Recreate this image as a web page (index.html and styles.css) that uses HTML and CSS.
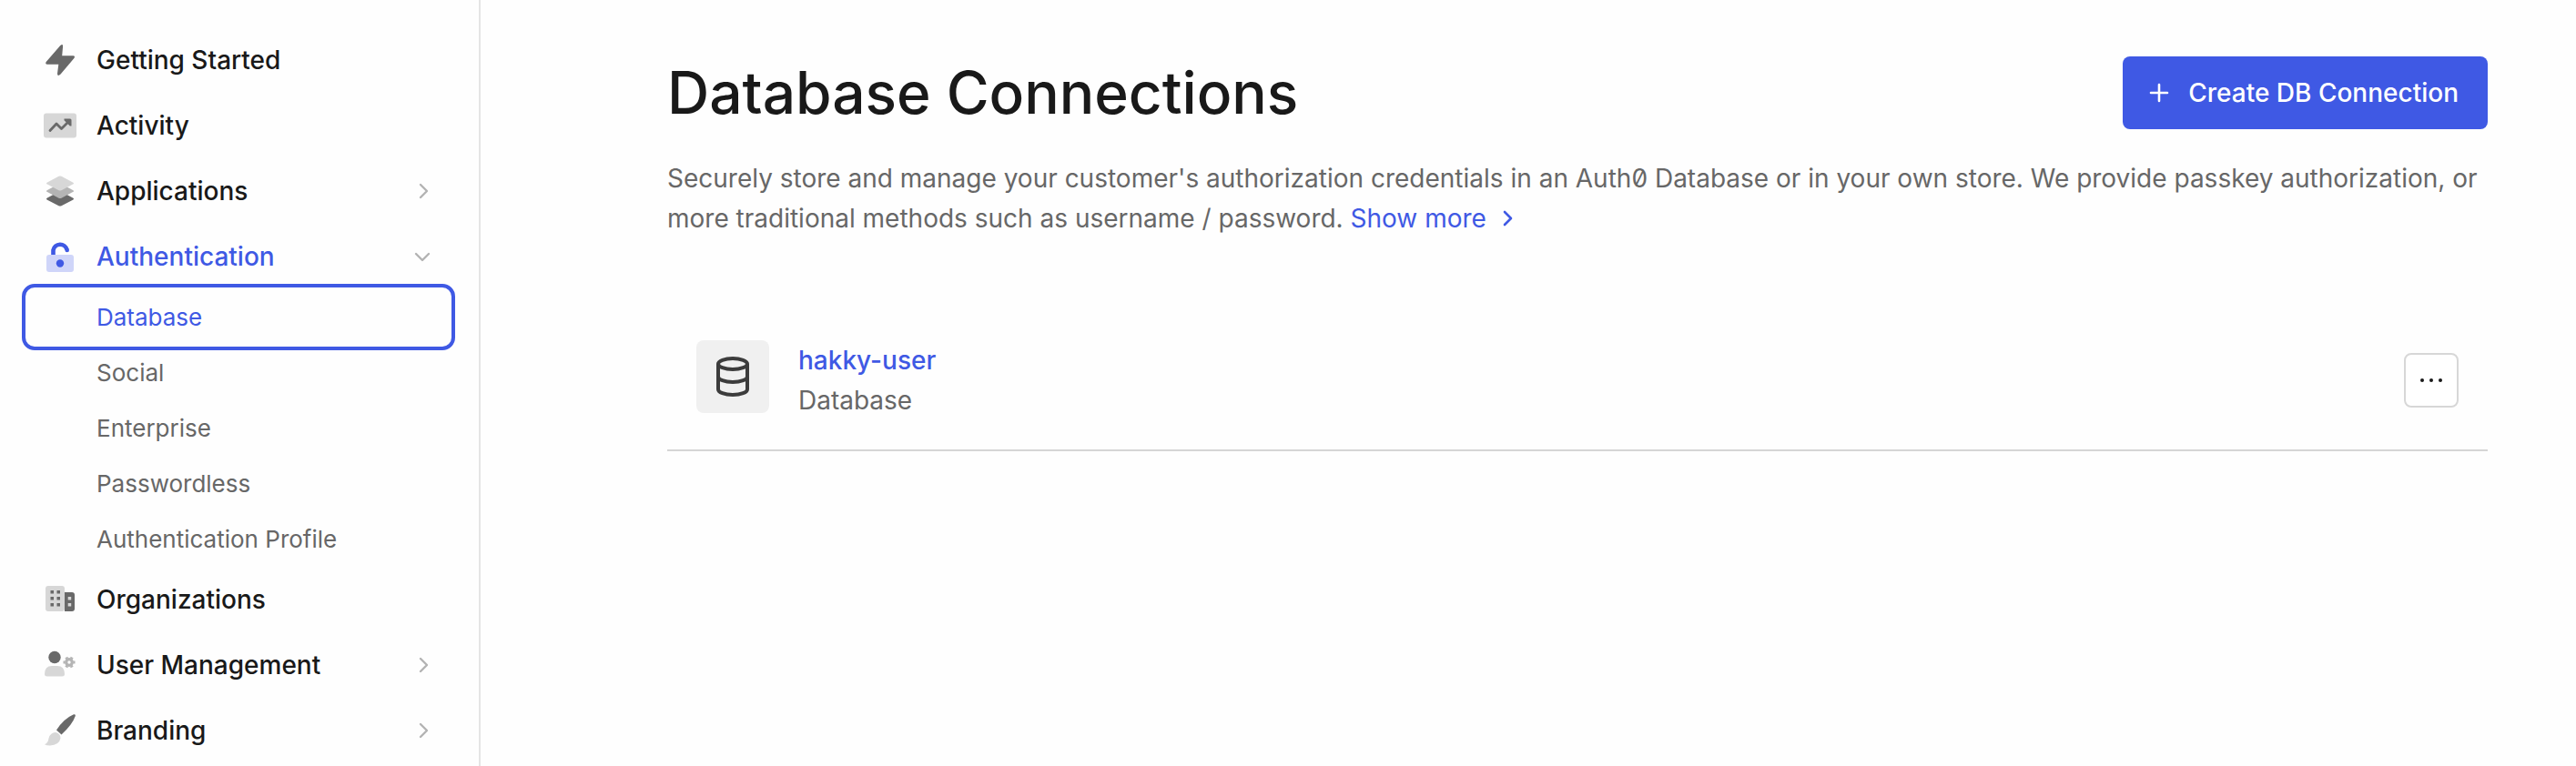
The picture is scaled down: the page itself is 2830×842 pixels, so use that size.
FILE: index.html
```html
<!DOCTYPE html>
<html lang="en">

<head>
    <meta charset="UTF-8">
    <meta name="viewport" content="width=device-width, initial-scale=1.0">
    <title>Database Connections</title>
    <link rel="stylesheet" href="styles.css">
</head>

<body>
    <div class="layout">
        <nav class="sidebar" aria-label="Main">
            <ul class="nav">
                <li>
                    <a class="nav__link" href="#">
                        <svg class="nav__icon" viewBox="0 0 40 40">
                            <path class="dark" d="M20.3 4 Q23.3 1.800 23.100 5 L22.200 15.200 H34.300 Q37 15.500 35.400 18 L20.600 35.600 Q17.200 38.600 17 35 L18.300 24.800 H6 Q3.300 24.600 4.700 22.100 Z" />
                        </svg>
                        <span class="nav__text">Getting Started</span>
                    </a>
                </li>
                <li>
                    <a class="nav__link" href="#">
                        <svg class="nav__icon" viewBox="0 0 40 40">
                            <rect class="light" x="2" y="6.500" width="36" height="27" rx="3" />
                            <path class="line" d="M9 25.500 L16 18 L21.500 23.500 L29 16" />
                            <path class="dark" d="M24.500 12.500 H31 Q32.500 12.500 32.500 14 V20.500 H30.800 L24.500 14.200 Z" />
                        </svg>
                        <span class="nav__text">Activity</span>
                    </a>
                </li>
                <li>
                    <a class="nav__link" href="#">
                        <svg class="nav__icon" viewBox="0 0 40 40">
                            <path class="dark" d="M18.500 20.800 Q20 20.200 21.500 20.800 L34 27.500 Q36 28.600 34 29.700 L21.500 36.200 Q20 37 18.500 36.200 L6 29.700 Q4 28.600 6 27.500 Z" />
                            <path class="mid" d="M18.500 12.200 Q20 11.500 21.500 12.200 L34 18.900 Q36 20 34 21.100 L21.500 27.700 Q20 28.400 18.500 27.700 L6 21.100 Q4 20 6 18.900 Z" />
                            <path class="light" d="M18.500 3.800 Q20 3 21.500 3.800 L34 10.400 Q36 11.500 34 12.600 L21.500 19.200 Q20 20 18.500 19.200 L6 12.600 Q4 11.500 6 10.400 Z" />
                        </svg>
                        <span class="nav__text">Applications</span>
                        <svg class="chevron" viewBox="0 0 32 32">
                            <path d="M16 9 L23 16 L16 23" />
                        </svg>
                    </a>
                </li>
                <li>
                    <a class="nav__link nav__link--active" href="#" aria-expanded="true">
                        <svg class="nav__icon" viewBox="0 0 40 40">
                            <rect class="tint" x="5" y="18" width="30" height="19" rx="3" />
                            <path class="shackle" d="M12.500 18 V13 A7.700 7.700 0 0 1 27.500 12.500" />
                            <circle class="shackle-end" cx="27.700" cy="13" r="2.300" />
                            <circle class="primary" cx="20" cy="27.500" r="4.200" />
                        </svg>
                        <span class="nav__text">Authentication</span>
                        <svg class="chevron" viewBox="0 0 32 32">
                            <path d="M11 13 L18 20 L25 13" />
                        </svg>
                    </a>
                    <ul class="subnav">
                        <li><a class="subnav__link subnav__link--active" href="#" aria-current="page">Database</a></li>
                        <li><a class="subnav__link" href="#">Social</a></li>
                        <li><a class="subnav__link" href="#">Enterprise</a></li>
                        <li><a class="subnav__link" href="#">Passwordless</a></li>
                        <li><a class="subnav__link" href="#">Authentication Profile</a></li>
                    </ul>
                </li>
                <li>
                    <a class="nav__link" href="#">
                        <svg class="nav__icon" viewBox="0 0 40 40">
                            <rect class="light" x="4" y="5" width="21" height="28" rx="3" />
                            <path class="dark" d="M25 12 H33 Q36 12 36 15 V30 Q36 33 33 33 H25 Z" />
                            <path class="dark" d="M9.500 10 h3.500 v3.500 h-3.500 Z M16.500 10 h3.500 v3.500 h-3.500 Z M9.500 17 h3.500 v3.500 h-3.500 Z M16.500 17 h3.500 v3.500 h-3.500 Z M9.500 24 h3.500 v3.500 h-3.500 Z M16.500 24 h3.500 v3.500 h-3.500 Z" />
                            <path class="light" d="M28.700 17 h3.500 v3.500 h-3.500 Z M28.700 24 h3.500 v3.500 h-3.500 Z" />
                        </svg>
                        <span class="nav__text">Organizations</span>
                    </a>
                </li>
                <li>
                    <a class="nav__link" href="#">
                        <svg class="nav__icon" viewBox="0 0 40 40">
                            <circle class="dark" cx="14" cy="11.500" r="6.700" />
                            <path class="light" d="M3 30 Q3 21 11 21 H17 Q25 21 25 30 Q25 32.500 22 32.500 H6 Q3 32.500 3 30 Z" />
                            <circle class="gear" cx="30" cy="17" r="3.300" />
                            <path class="gear" d="M34.500 17 H36.500 M23.500 17 H25.500 M32.300 20.900 L33.200 22.500 M27.700 20.900 L26.800 22.500 M32.300 13.100 L33.200 11.500 M27.700 13.100 L26.800 11.500" />
                        </svg>
                        <span class="nav__text">User Management</span>
                        <svg class="chevron" viewBox="0 0 32 32">
                            <path d="M16 9 L23 16 L16 23" />
                        </svg>
                    </a>
                </li>
                <li>
                    <a class="nav__link" href="#">
                        <svg class="nav__icon" viewBox="0 0 40 40">
                            <path class="dark" d="M16 19.500 Q24 7 35 2.300 Q37.300 1.800 36.800 4 Q33.500 13.500 21.500 24.500 Z" />
                            <path class="light" d="M15 22 Q20.500 23 20.500 28.500 Q19 36 9 36.500 Q5 36.500 3 35.300 Q7 33.500 7.500 28.500 Q9.500 22 15 22 Z" />
                        </svg>
                        <span class="nav__text">Branding</span>
                        <svg class="chevron" viewBox="0 0 32 32">
                            <path d="M16 9 L23 16 L16 23" />
                        </svg>
                    </a>
                </li>
            </ul>
        </nav>

        <main class="content">
            <header class="page-header">
                <h1 class="page-header__title">Database Connections</h1>
                <button class="btn-primary" type="button">
                    <svg class="btn-primary__icon" viewBox="0 0 24 24">
                        <path d="M12 3 V21 M3 12 H21" />
                    </svg>
                    Create DB Connection
                </button>
            </header>

            <p class="description">
                Securely store and manage your customer's authorization credentials in an Auth0 Database or in your own
                store. We provide passkey authorization, or more traditional methods such as username / password.
                <a class="description__more" href="#">Show more<svg class="description__arrow" viewBox="0 0 24 24">
                        <path d="M8 5 L15 12 L8 19" />
                    </svg></a>
            </p>

            <ul class="connections">
                <li class="connection">
                    <div class="connection__icon">
                        <svg viewBox="0 0 48 48">
                            <ellipse cx="24" cy="10" rx="16" ry="6" />
                            <path d="M8 10 V38 C8 41.300 15 44 24 44 S40 41.300 40 38 V10" />
                            <path d="M8 24 C8 27.300 15 30 24 30 S40 27.300 40 24" />
                        </svg>
                    </div>
                    <div class="connection__info">
                        <a class="connection__name" href="#">hakky-user</a>
                        <span class="connection__type">Database</span>
                    </div>
                    <button class="btn-more" type="button" aria-label="More actions">
                        <svg viewBox="0 0 32 32">
                            <circle cx="6" cy="16" r="2" />
                            <circle cx="16" cy="16" r="2" />
                            <circle cx="26" cy="16" r="2" />
                        </svg>
                    </button>
                </li>
            </ul>
        </main>
    </div>
</body>

</html>
```
FILE: styles.css
```css
*,
*::after,
*::before {
    box-sizing: border-box;
}

body {
    margin: 0;
    background-color: #fefefe;
    color: #191919;
    font-family: Inter, sans-serif;
    font-size: 28px;
    line-height: 44px;
}

a {
    color: inherit;
    text-decoration: none;
}

ul {
    list-style: none;
    margin: 0;
    padding: 0;
}

svg {
    display: block;
    flex-shrink: 0;
}

.layout {
    display: flex;
    height: 100vh;
    overflow: hidden;
}

/* Sidebar */
.sidebar {
    width: 528px;
    flex-shrink: 0;
    padding: 30px 32px 0 30px;
    border-right: 2px solid #e5e5e5;
    overflow: hidden;
}

.nav__link {
    display: flex;
    align-items: center;
    gap: 20px;
    height: 72px;
    padding: 0 16px;
    font-weight: 500;
}

.nav__link--active {
    color: #3f59e4;
}

.nav__icon {
    width: 40px;
    height: 40px;
}

.nav__text {
    flex: 1;
}

.dark {
    fill: #696969;
}

.mid {
    fill: #b4b4b4;
}

.light {
    fill: #d7d7d7;
}

.tint {
    fill: #cfd5f9;
}

.primary,
.shackle-end {
    fill: #3f59e4;
}

.line {
    fill: none;
    stroke: #696969;
    stroke-width: 2.8;
    stroke-linecap: round;
    stroke-linejoin: round;
}

.shackle {
    fill: none;
    stroke: #3f59e4;
    stroke-width: 4.6;
}

.gear {
    fill: none;
    stroke: #b4b4b4;
    stroke-width: 3.2;
}

.chevron {
    width: 32px;
    height: 32px;
}

.chevron path {
    fill: none;
    stroke: #b3b3b3;
    stroke-width: 2.4;
    stroke-linecap: round;
    stroke-linejoin: round;
}

.subnav__link {
    display: block;
    padding-left: 76px;
    border-radius: 8px;
    color: #676767;
    font-size: 26px;
    line-height: 61px;
}

.subnav__link--active {
    color: #3f59e4;
    outline: 4px solid #3f59e4;
    outline-offset: 2px;
}

/* Content */
.content {
    flex: 1;
    min-width: 0;
    padding: 62px 97px 0 205px;
}

.page-header {
    display: flex;
    align-items: center;
    justify-content: space-between;
    margin-bottom: 32px;
}

.page-header__title {
    margin: 0;
    font-size: 64px;
    font-weight: 500;
    line-height: 80px;
}

.btn-primary {
    display: flex;
    align-items: center;
    gap: 20px;
    height: 80px;
    padding: 0 32px 0 28px;
    border: none;
    border-radius: 8px;
    background-color: #3f59e4;
    color: #fff;
    font: inherit;
    font-weight: 500;
    cursor: pointer;
}

.btn-primary__icon {
    width: 24px;
    height: 24px;
}

.btn-primary__icon path {
    fill: none;
    stroke: #fff;
    stroke-width: 2.6;
    stroke-linecap: round;
}

.description {
    margin: 0 0 80px;
    color: #676767;
    font-feature-settings: "zero";
}

.description__more {
    color: #3f59e4;
}

.description__arrow {
    display: inline-block;
    width: 24px;
    height: 24px;
    margin-left: 12px;
    vertical-align: -2px;
}

.description__arrow path {
    fill: none;
    stroke: #3f59e4;
    stroke-width: 2.6;
    stroke-linecap: round;
    stroke-linejoin: round;
}

.connection {
    display: flex;
    align-items: center;
    gap: 32px;
    padding: 32px;
    border-bottom: 2px solid #d5d5d5;
}

.connection__icon {
    display: flex;
    align-items: center;
    justify-content: center;
    align-self: flex-start;
    width: 80px;
    height: 80px;
    border-radius: 8px;
    background-color: #f0f0f0;
}

.connection__icon svg {
    width: 48px;
    height: 48px;
    fill: none;
    stroke: #3c3c3c;
    stroke-width: 4;
}

.connection__info {
    display: flex;
    flex: 1;
    flex-direction: column;
    align-items: flex-start;
}

.connection__name {
    color: #3f59e4;
    font-weight: 500;
}

.connection__type {
    color: #676767;
}

.btn-more {
    display: flex;
    align-items: center;
    justify-content: center;
    width: 60px;
    height: 60px;
    padding: 0;
    border: 2px solid #d7d7d7;
    border-radius: 8px;
    background-color: #fff;
    cursor: pointer;
}

.btn-more svg {
    width: 32px;
    height: 32px;
    fill: #191919;
}
```
